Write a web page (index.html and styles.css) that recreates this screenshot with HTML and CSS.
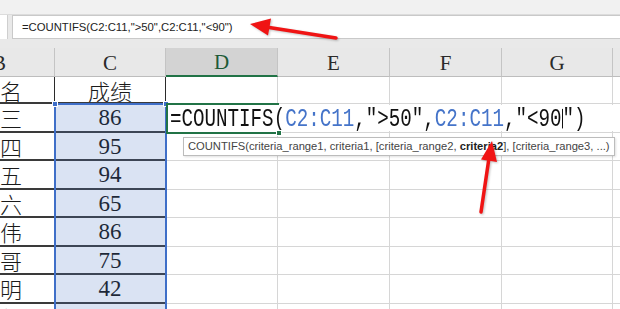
FILE: index.html
```html
<!DOCTYPE html>
<html lang="zh">
<head>
<meta charset="utf-8">
<link rel="stylesheet" href="styles.css">
</head>
<body>
<div class="app">
  <div class="ribbon"></div>
  <div class="fbar">
    <div class="namebox"></div>
    <div class="finput">=COUNTIFS(C2:C11,"&gt;50",C2:C11,"&lt;90")</div>
  </div>
  <div class="sheet">
    <div class="c h">B</div><div class="c h">C</div><div class="c h hsel">D</div><div class="c h">E</div><div class="c h">F</div><div class="c h">G</div><div class="c h"></div>

    <div class="c t zh b">姓名</div><div class="c t zh">成绩</div><div class="c"></div><div class="c"></div><div class="c"></div><div class="c"></div><div class="c"></div>
    <div class="c t zh b">张三</div><div class="c t n">86</div><div class="c"></div><div class="c"></div><div class="c"></div><div class="c"></div><div class="c"></div>
    <div class="c t zh b">李四</div><div class="c t n">95</div><div class="c"></div><div class="c"></div><div class="c"></div><div class="c"></div><div class="c"></div>
    <div class="c t zh b">王五</div><div class="c t n">94</div><div class="c"></div><div class="c"></div><div class="c"></div><div class="c"></div><div class="c"></div>
    <div class="c t zh b">赵六</div><div class="c t n">65</div><div class="c"></div><div class="c"></div><div class="c"></div><div class="c"></div><div class="c"></div>
    <div class="c t zh b">大伟</div><div class="c t n">86</div><div class="c"></div><div class="c"></div><div class="c"></div><div class="c"></div><div class="c"></div>
    <div class="c t zh b">二哥</div><div class="c t n">75</div><div class="c"></div><div class="c"></div><div class="c"></div><div class="c"></div><div class="c"></div>
    <div class="c t zh b">小明</div><div class="c t n">42</div><div class="c"></div><div class="c"></div><div class="c"></div><div class="c"></div><div class="c"></div>
    <div class="c t zh b">小红</div><div class="c t n">88</div><div class="c"></div><div class="c"></div><div class="c"></div><div class="c"></div><div class="c"></div>
  </div>

  <div class="selection"><span class="hd hl"></span><span class="hd hr"></span></div>
  <div class="edit"><span class="ftext">=COUNTIFS(<span class="r1">C2:C11</span>,″&gt;50″,<span class="r2">C2:C11</span>,″&lt;90<span class="caret"></span>″)</span></div>
  <div class="active"><span class="fill"></span></div>
  <div class="tip">COUNTIFS(criteria_range1, criteria1, [criteria_range2, <b>criteria2</b>], [criteria_range3, ...)</div>

  <svg class="arrows" width="620" height="309" viewBox="0 0 620 309">
    <line x1="336" y1="38" x2="266" y2="27" stroke="#f01414" stroke-width="3.5" stroke-linecap="round"/>
    <polygon points="250,24 271,18.5 268,35.5" fill="#f01414"/>
    <line x1="481" y1="212" x2="489" y2="158" stroke="#f01414" stroke-width="3.5" stroke-linecap="round"/>
    <polygon points="492,141 497,162 481,159.5" fill="#f01414"/>
  </svg>
</div>
</body>
</html>
```

FILE: styles.css
```css
* { box-sizing: border-box; }
html, body { margin: 0; padding: 0; }
body { width: 620px; height: 309px; overflow: hidden; background: #fff; }

.app { position: relative; width: 620px; height: 309px; overflow: hidden; }

.ribbon { height: 15px; background: #f1f1f1; border-bottom: 1px solid #dcdcdc; }

.fbar {
  display: flex;
  gap: 4px;
  height: 33px;
  padding-bottom: 9px;
  background: #e9e9e9;
}
.namebox { width: 8px; height: 24px; background: #fff; border-right: 1px solid #cfcfcf; }
.finput {
  flex: 1;
  height: 24px;
  background: #fff;
  border: 1px solid #c9c9c9;
  border-right: none;
  padding-left: 9px;
  font-family: "Liberation Sans", Arial, sans-serif;
  font-size: 11.3px;
  line-height: 22px;
  color: #222;
}

.sheet {
  display: grid;
  grid-template-columns: 111px 111px 112px 112px 112px 111px 60px;
  grid-template-rows: 29px 27px repeat(8, 28.5px);
  margin-left: -56px;
}
.c {
  display: flex;
  align-items: center;
  justify-content: center;
  border-right: 1px solid #d6d6d6;
  border-bottom: 1px solid #d6d6d6;
  overflow: hidden;
  white-space: nowrap;
}
.h {
  background: #e8e8e8;
  border-right-color: #c4c4c4;
  border-bottom-color: #bdbdbd;
  font-family: "Liberation Serif", "Times New Roman", serif;
  font-size: 21px;
  color: #2a2a2a;
  padding-top: 2px;
}
.hsel {
  background: #d3d3d3;
  border-bottom: 2px solid #217346;
  color: #1e5a36;
}
.t { border-right-color: #2b2b2b; border-bottom: 2px solid #3a3a3a; }
.zh {
  font-family: "Noto Sans CJK SC", sans-serif;
  font-size: 22px;
  color: #1a1a1a;
  font-weight: 300;
}
.b { padding-left: 2px; letter-spacing: 2px; }
.n {
  font-family: "Liberation Serif", "Times New Roman", serif;
  font-size: 23px;
  color: #151515;
  padding-top: 2px;
}

.selection {
  position: absolute;
  left: 54px;
  top: 103px;
  width: 113px;
  height: 220px;
  border: 2px solid #3f6fc8;
  background: rgba(68, 114, 196, 0.2);
}
.hd {
  position: absolute;
  top: -4px;
  width: 6px;
  height: 6px;
  background: #3f6fc8;
  border: 1px solid #fff;
}
.hl { left: -4px; }
.hr { right: -4px; }

.edit {
  position: absolute;
  left: 168px;
  top: 105px;
  right: 0;
  height: 26px;
  background: #fff;
  display: flex;
  align-items: center;
  padding-left: 2px;
}
.ftext {
  display: inline-block;
  font-family: "Liberation Mono", "DejaVu Sans Mono", monospace;
  font-size: 19.2px;
  color: #111;
  transform: scaleY(1.3);
  white-space: pre;
  padding-top: 2px;
}
.r1, .r2 { color: #4574c9; }
.caret {
  display: inline-block;
  width: 1px;
  height: 15px;
  background: #111;
  vertical-align: -2px;
}

.active {
  position: absolute;
  left: 166px;
  top: 103px;
  width: 113px;
  height: 31px;
  border: 2px solid #217346;
  border-right: none;
}
.fill {
  position: absolute;
  right: -3px;
  bottom: -4px;
  width: 6px;
  height: 6px;
  background: #217346;
  border: 1px solid #fff;
}

.tip {
  position: absolute;
  left: 183px;
  top: 137px;
  width: 432px;
  height: 19px;
  background: #fff;
  border: 1px solid #bcbcbc;
  box-shadow: 1px 1px 2px rgba(0,0,0,0.12);
  font-family: "Liberation Sans", Arial, sans-serif;
  font-size: 11.2px;
  line-height: 17px;
  color: #444;
  padding-left: 4px;
  white-space: nowrap;
}
.tip b { color: #222; }

.arrows {
  position: absolute;
  left: 0;
  top: 0;
  filter: drop-shadow(1px 1px 1px rgba(0,0,0,0.25));
}
```
